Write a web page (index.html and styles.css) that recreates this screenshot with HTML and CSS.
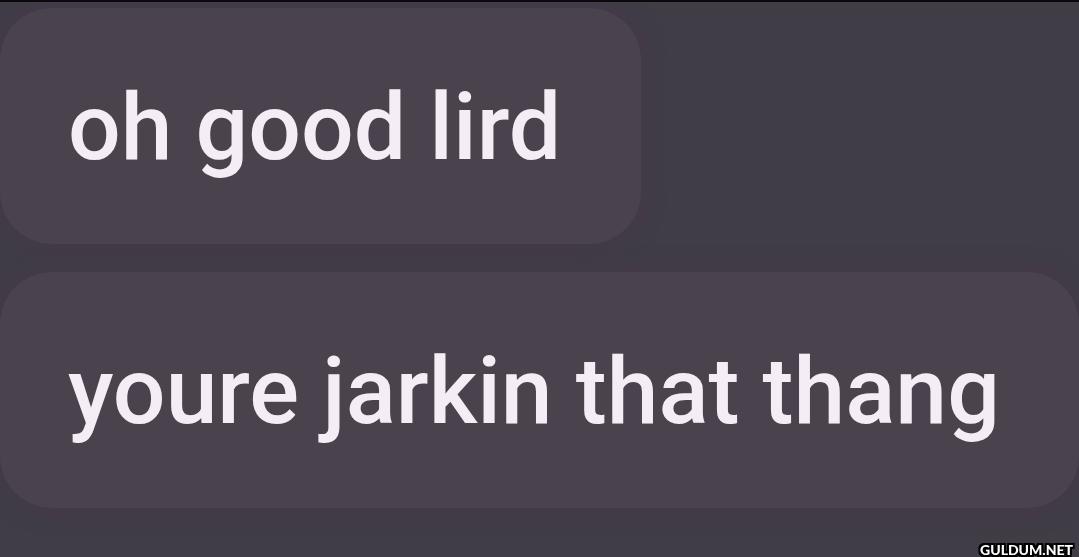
FILE: index.html
```html
<!DOCTYPE html>
<html lang="en">
<head>
    <meta charset="UTF-8">
    <title>Chat</title>
    <meta name="viewport" content="width=device-width, initial-scale=1.0">
    <link rel="stylesheet" href="styles.css">
</head>
<body>
    <main class="chat">
        <p class="bubble">oh good lird</p>
        <p class="bubble">youre jarkin that thang</p>
    </main>
    <div class="watermark">GULDUM.NET</div>
</body>
</html>
```

FILE: styles.css
```css
* {
    box-sizing: border-box;
}

body {
    margin: 0;
    min-height: 100vh;
    border-top: 2px solid #0b090c;
    background-color: #403d47;
    font-family: Roboto, sans-serif;
}

.chat {
    display: flex;
    flex-direction: column;
    align-items: flex-start;
    gap: 28px;
    padding: 6px 0 48px;
}

.bubble {
    max-width: 100%;
    margin: 0;
    padding: 60px 80px 56px 68px;
    border-radius: 52px;
    background-color: #4a424d;
    box-shadow: 0 0 16px 8px #443a48;
    color: #f4edf5;
    font-size: 93px;
    font-weight: 500;
    line-height: 120px;
    white-space: nowrap;
}

.watermark {
    position: fixed;
    right: 6px;
    bottom: 0;
    color: #fff;
    font-family: Lato, sans-serif;
    font-size: 14px;
    font-weight: 900;
    line-height: 14px;
    text-shadow: -2px 0 #000, 2px 0 #000, 0 -2px #000, 0 2px #000, -2px -2px #000, 2px -2px #000, 2px 2px #000, -2px 2px #000;
}
```
